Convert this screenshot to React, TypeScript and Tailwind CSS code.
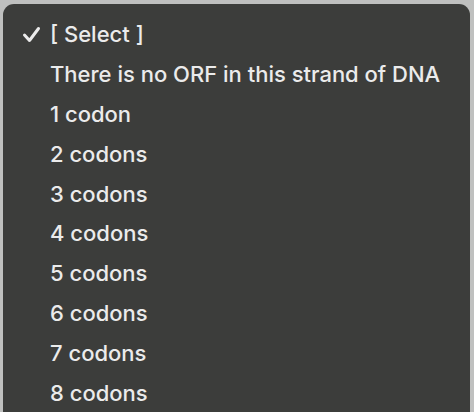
const options = [
  "There is no ORF in this strand of DNA",
  "1 codon",
  "2 codons",
  "3 codons",
  "4 codons",
  "5 codons",
  "6 codons",
  "7 codons",
  "8 codons",
];

export default function App() {
  return (
    <div className="h-[412px] w-[474px] overflow-hidden bg-[#bfc0bf] pl-[3px] pr-[4px] pt-[4px]">
      <div
        className="h-[420px] rounded-t-[11px] bg-[#3c3d3b] pt-[11px] text-[#ebebeb]"
        style={{ fontFamily: 'Inter, "Liberation Sans", Arial, sans-serif' }}
      >
        <ul className="flex flex-col">
          <li className="flex h-[39.8px] items-center text-[22px] font-medium">
            <span className="flex w-[47px] justify-end pr-[9px]">
              <svg width="19" height="17" viewBox="0 0 19 17" fill="none">
                <path
                  d="M2.5 9 L7.5 14.5 L16.5 2.5"
                  stroke="#ebebeb"
                  strokeWidth="3"
                  strokeLinecap="round"
                  strokeLinejoin="round"
                />
              </svg>
            </span>
            <span>[ Select ]</span>
          </li>
          {options.map((o) => (
            <li key={o} className="flex h-[39.8px] items-center pl-[47px] text-[22px] font-medium">
              {o}
            </li>
          ))}
        </ul>
      </div>
    </div>
  );
}
